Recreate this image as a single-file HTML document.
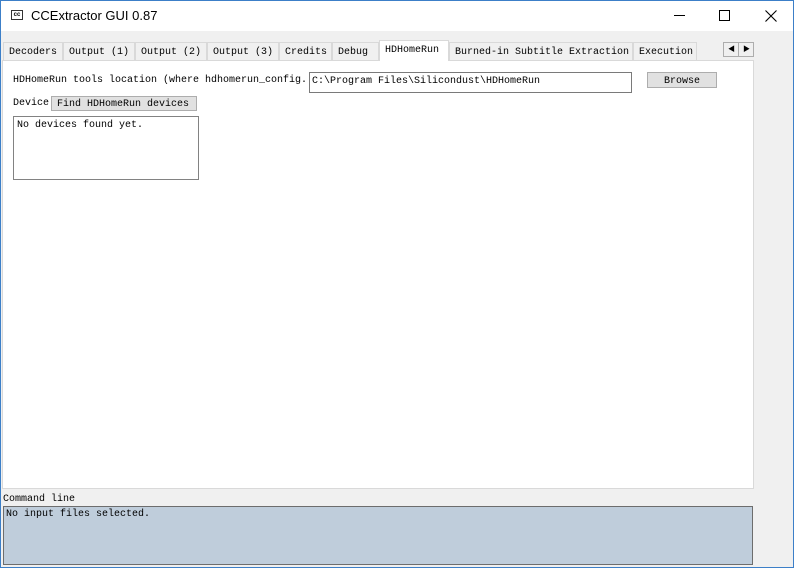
<!DOCTYPE html>
<html><head><style>
*{margin:0;padding:0;box-sizing:border-box}
body{width:794px;height:568px;background:#f0f0f0;position:relative;overflow:hidden;font-family:"Liberation Mono","Noto Sans CJK SC",monospace;font-size:10px;color:#000}
.abs{position:absolute}
.frame{left:0;top:0;width:794px;height:568px;border:1px solid #3c7fc8;}
.title{left:1px;top:1px;width:792px;height:30px;background:#fff}
.tab{position:absolute;top:42px;height:18px;border:1px solid #d9d9d9;border-bottom:none;background:#f0f0f0;line-height:20px;padding-left:5px;white-space:nowrap}
</style></head><body>
<div class="abs frame"></div>
<div class="abs title">
 <div class="abs" style="left:10px;top:9px;width:12px;height:10px;border:1px solid #333;font-size:6px;line-height:8px;text-align:center;font-family:'Liberation Sans',sans-serif;font-weight:bold">cc</div>
 <div class="abs" style="left:30px;top:7px;font-family:'Liberation Sans',sans-serif;font-size:13px">CCExtractor GUI 0.87</div>
 <div class="abs" style="left:673px;top:14px;width:11px;height:1px;background:#000"></div>
 <div class="abs" style="left:718px;top:9px;width:11px;height:11px;border:1px solid #000"></div>
 <svg class="abs" style="left:764px;top:9px" width="12" height="12"><path d="M0.5 0.5L11.5 11.5M11.5 0.5L0.5 11.5" stroke="#000" stroke-width="1.1"/></svg>
</div>
<div class="tab" style="left:3px;width:60px">Decoders</div>
<div class="tab" style="left:63px;width:72px">Output (1)</div>
<div class="tab" style="left:135px;width:72px">Output (2)</div>
<div class="tab" style="left:207px;width:72px">Output (3)</div>
<div class="tab" style="left:279px;width:53px">Credits</div>
<div class="tab" style="left:332px;width:47px">Debug</div>
<div class="tab" style="left:449px;width:184px">Burned-in Subtitle Extraction</div>
<div class="tab" style="left:633px;width:64px">Execution</div>
<div class="abs" style="left:2px;top:60px;width:752px;height:429px;background:#fff;border:1px solid #d9d9d9"></div>
<div class="tab" style="left:379px;top:40px;height:21px;width:70px;background:#fff;border-color:#d9d9d9;z-index:2;line-height:19px">HDHomeRun</div>
<div class="abs" style="left:723px;top:42px;width:31px;height:15px;border:1px solid #adadad;background:#f0f0f0"><div class="abs" style="left:14px;top:0;width:1px;height:13px;background:#adadad"></div><span class="abs" style="left:4px;top:1px;font-size:7px">◀</span><span class="abs" style="left:19px;top:1px;font-size:7px">▶</span></div>
<div class="abs" style="left:13px;top:75px">HDHomeRun tools location (where hdhomerun_config.</div>
<div class="abs" style="left:309px;top:72px;width:323px;height:21px;border:1px solid #7a7a7a;background:#fff;padding:3px 0 0 2px">C:\Program Files\Silicondust\HDHomeRun</div>
<div class="abs" style="left:647px;top:72px;width:70px;height:16px;border:1px solid #adadad;background:#e1e1e1;text-align:center;line-height:17px">Browse</div>
<div class="abs" style="left:13px;top:98px">Device</div>
<div class="abs" style="left:51px;top:96px;width:146px;height:15px;border:1px solid #adadad;background:#e1e1e1;line-height:16px;padding-left:5px">Find HDHomeRun devices</div>
<div class="abs" style="left:13px;top:116px;width:186px;height:64px;border:1px solid #828282;background:#fff;padding:3px 0 0 3px">No devices found yet.</div>
<div class="abs" style="left:3px;top:494px">Command line</div>
<div class="abs" style="left:3px;top:506px;width:750px;height:59px;border:1px solid #6d6d6d;background:#bfcddb;padding:2px 0 0 2px">No input files selected.</div>
</body></html>
